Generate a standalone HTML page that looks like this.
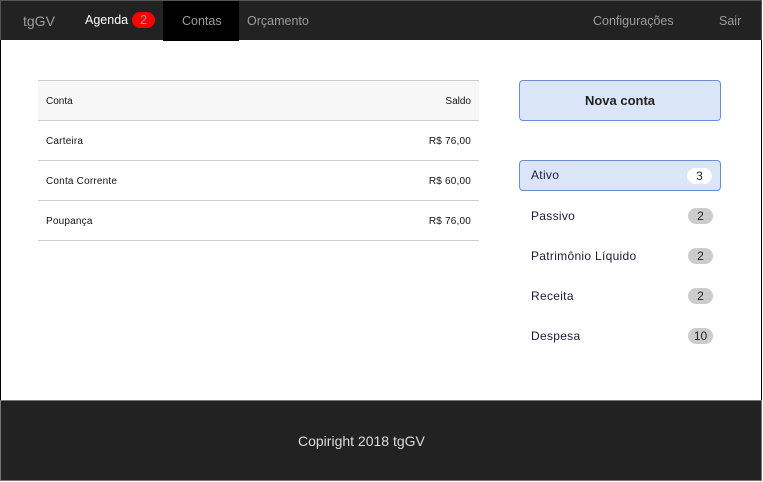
<!DOCTYPE html>
<html><head><meta charset="utf-8"><style>
*{margin:0;padding:0;box-sizing:border-box}
body{width:763px;height:482px;background:#fff;font-family:"Liberation Sans",sans-serif;position:relative;overflow:hidden}
.frame{position:absolute;left:0;top:0;width:762px;height:481px;border:1px solid #000}
.nav{position:absolute;left:0;top:0;width:762px;height:40px;background:#222;border:1px solid #555;border-bottom:none}
.nav span{position:absolute;top:13px;font-size:12.5px;color:#9d9d9d}
.badge{display:inline-block;background:#f00;color:#fff;border-radius:9px;padding:1px 8px;font-size:12px;margin-left:4px}
.cur{position:absolute;left:162px;top:0;width:76px;height:40px;background:#000}
.tbl{position:absolute;left:38px;top:80px;width:441px}
.row{height:40px;border-top:1px solid #ccc;position:relative;font-size:10px;color:#111;letter-spacing:.2px}
.row:last-child{border-bottom:1px solid #ccc;height:41px}
.row .l{position:absolute;left:8px;top:15px}
.row .r{position:absolute;right:8px;top:15px}
.btn{position:absolute;left:519px;top:80px;width:202px;height:41px;background:#dae6f8;border:1px solid #6b8fce;border-radius:4px;text-align:center;line-height:39px;font-weight:bold;font-size:13px;color:#222}
.item{position:absolute;left:519px;width:202px;height:31px;font-size:12px;color:#1a1a3a;letter-spacing:.3px}
.item .t{position:absolute;left:12px;top:9px}
.item .b{position:absolute;right:8px;top:8px;background:#ccc;border-radius:9px;font-size:12px;padding:1px 0;width:25px;text-align:center;color:#222;letter-spacing:0}
.act{background:#dae6f8;border:1px solid #6b8fce;border-radius:4px}
.act .b{background:#fff;top:7px}
.foot{position:absolute;left:0;top:400px;width:762px;height:81px;background:#222;border:1px solid #777;color:#ddd;font-size:14px;line-height:80px}
.foot span{position:absolute;left:297px;top:0}
</style></head><body>
<div class="frame"></div>
<div class="nav">
<div class="cur"></div>
<span style="left:22px;font-size:14px;top:12px">tgGV</span>
<span style="left:84px;top:11px;color:#fff">Agenda<span class="badge" style="position:static">2</span></span>
<span style="left:181px">Contas</span>
<span style="left:246px">Orçamento</span>
<span style="left:592px">Configurações</span>
<span style="left:718px">Sair</span>
</div>
<div class="tbl">
<div class="row" style="background:#f7f7f7;letter-spacing:0"><span class="l">Conta</span><span class="r">Saldo</span></div>
<div class="row"><span class="l">Carteira</span><span class="r">R$ 76,00</span></div>
<div class="row"><span class="l">Conta Corrente</span><span class="r">R$ 60,00</span></div>
<div class="row"><span class="l">Poupança</span><span class="r">R$ 76,00</span></div>
</div>
<div class="btn">Nova conta</div>
<div class="item act" style="top:160px"><span class="t" style="top:7px;left:11px">Ativo</span><span class="b">3</span></div>
<div class="item" style="top:200px"><span class="t">Passivo</span><span class="b">2</span></div>
<div class="item" style="top:240px"><span class="t">Patrimônio Líquido</span><span class="b">2</span></div>
<div class="item" style="top:280px"><span class="t">Receita</span><span class="b">2</span></div>
<div class="item" style="top:320px"><span class="t">Despesa</span><span class="b">10</span></div>
<div class="foot"><span>Copiright 2018 tgGV</span></div>
</body></html>
